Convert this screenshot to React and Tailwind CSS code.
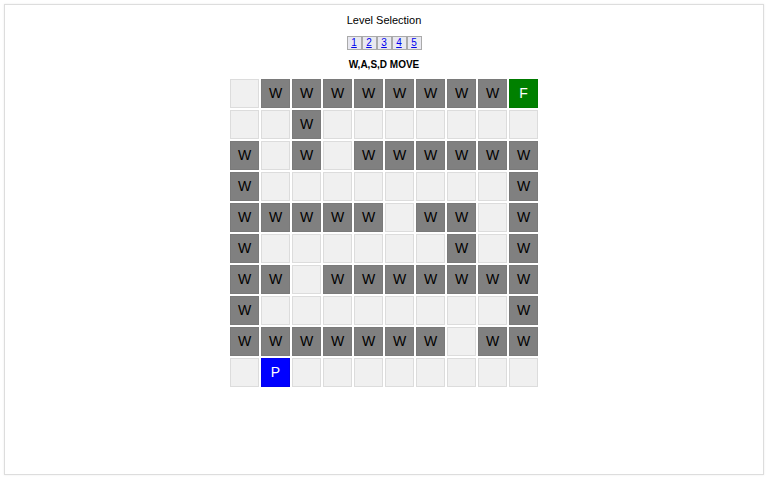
import React from 'react'

const MAP = [
  'EWWWWWWWWF',
  'EEWEEEEEEE',
  'WEWEWWWWWW',
  'WEEEEEEEEW',
  'WWWWWEWWEW',
  'WEEEEEEWEW',
  'WWEWWWWWWW',
  'WEEEEEEEEW',
  'WWWWWWWEWW',
  'EPEEEEEEEE',
]

const Cell = ({ type }) => {
  if (type === 'W') {
    return (
      <div className="w-[29px] h-[29px] bg-[#808080] border border-[#7a7a7a] flex items-center justify-center text-[14px] text-black">
        W
      </div>
    )
  }
  if (type === 'F') {
    return (
      <div className="w-[29px] h-[29px] bg-[#008000] border border-[#007a00] flex items-center justify-center text-[14px] text-white">
        F
      </div>
    )
  }
  if (type === 'P') {
    return (
      <div className="w-[29px] h-[29px] bg-[#0000ff] border border-[#0000ee] flex items-center justify-center text-[14px] text-white">
        P
      </div>
    )
  }
  return <div className="w-[29px] h-[29px] bg-[#f0f0f0] border border-[#dcdcdc]" />
}

export default function App() {
  return (
    <div className="w-[768px] h-[480px] bg-white p-[4px]" style={{ fontFamily: '"Liberation Sans", Arial, sans-serif' }}>
      <div className="h-[471px] border border-[#dddddd] shadow-[0_0_2px_rgba(0,0,0,0.08)] flex flex-col items-center">
        <p className="mt-[8px] text-[11px] text-black leading-[14px]">Level Selection</p>

        {/* level buttons */}
        <div className="mt-[9px] flex">
          {[1, 2, 3, 4, 5].map((n) => (
            <button
              key={n}
              className="w-[15px] h-[14px] bg-[#e8e8f0] border border-[#aaaaaa] text-[10px] leading-[12px] text-[#0000ee] underline flex items-center justify-center"
            >
              {n}
            </button>
          ))}
        </div>

        <p className="mt-[9px] text-[10px] font-bold text-black leading-[12px]">W,A,S,D MOVE</p>

        {/* board */}
        <div className="mt-[8px] grid grid-cols-10 gap-[2px]">
          {MAP.map((row, r) =>
            row.split('').map((t, c) => <Cell key={r + '-' + c} type={t} />)
          )}
        </div>
      </div>
    </div>
  )
}
